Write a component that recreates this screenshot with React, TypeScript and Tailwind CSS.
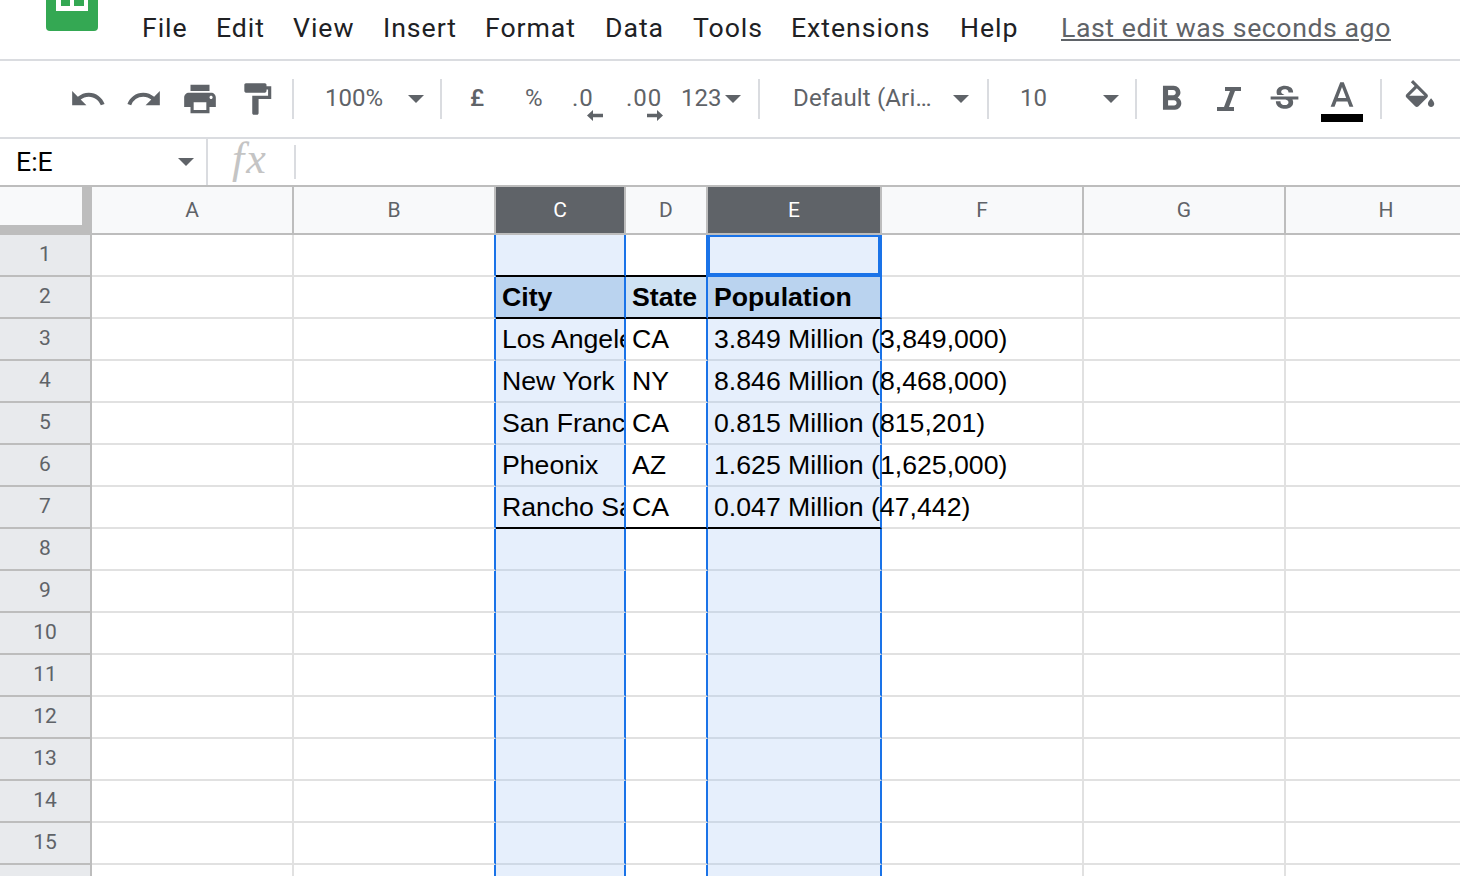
import { MdUndo, MdRedo, MdPrint, MdFormatBold, MdStrikethroughS } from "react-icons/md";

const roboto = "font-['Roboto',sans-serif]";
const arial = "font-['Liberation_Sans',Arial,sans-serif]";
const gridCols = "grid w-[1488px] grid-cols-[92px_202px_202px_130px_82px_174px_202px_202px_202px]";

const columns = ["A", "B", "C", "D", "E", "F", "G", "H"];
const selected = ["C", "E"];

const tableRows: Record<number, string[]> = {
  2: ["City", "State", "Population"],
  3: ["Los Angeles", "CA", "3.849 Million (3,849,000)"],
  4: ["New York", "NY", "8.846 Million (8,468,000)"],
  5: ["San Francisco", "CA", "0.815 Million (815,201)"],
  6: ["Pheonix", "AZ", "1.625 Million (1,625,000)"],
  7: ["Rancho Santa Margarita", "CA", "0.047 Million (47,442)"],
};

function Caret() {
  return (
    <svg width="16" height="8" viewBox="0 0 16 8" className="shrink-0 fill-[#5f6368]">
      <path d="M0 0h16L8 8z" />
    </svg>
  );
}

function Divider() {
  return <div className="h-10 w-0.5 shrink-0 bg-[#dadce0]" />;
}

function MenuBar() {
  const items: [string, string][] = [
    ["File", "w-[74px]"],
    ["Edit", "w-[77px]"],
    ["View", "w-[90px]"],
    ["Insert", "w-[102px]"],
    ["Format", "w-[120px]"],
    ["Data", "w-[88px]"],
    ["Tools", "w-[98px]"],
    ["Extensions", "w-[169px]"],
    ["Help", "w-[101px]"],
  ];
  return (
    <div className="flex h-[61px] items-start border-b-2 border-[#dadce0] pl-[46px]">
      <svg width="52" height="31" viewBox="0 0 52 31" className="shrink-0">
        <path d="M0-10h52v37a4 4 0 0 1-4 4H4a4 4 0 0 1-4-4z" fill="#34a853" />
        <path d="M10-4h32v15H10z" fill="#fff" />
        <path d="M15-2h9v8h-9zM28-2h10v8H28z" fill="#34a853" />
      </svg>
      <div className={`ml-11 flex h-[56px] items-center text-[26.67px] tracking-[0.95px] text-[#202124] ${roboto}`}>
        {items.map(([label, w]) => (
          <div key={label} className={`${w} shrink-0`}>
            {label}
          </div>
        ))}
        <span className="whitespace-nowrap tracking-[0.57px] text-[#5f6368] underline">Last edit was seconds ago</span>
      </div>
    </div>
  );
}

function Toolbar() {
  return (
    <div className={`flex h-[78px] items-center border-b-2 border-[#dadce0] pl-[69px] text-[24px] text-[#5f6368] ${roboto}`}>
      <div className="w-14 shrink-0"><MdUndo size={38} /></div>
      <div className="w-14 shrink-0"><MdRedo size={38} /></div>
      <div className="w-[57px] shrink-0"><MdPrint size={38} /></div>
      <div className="w-[54px] shrink-0">
        <svg width="38" height="38" viewBox="0 0 24 24" fill="currentColor">
          <path d="M18 4V3c0-.55-.45-1-1-1H5c-.55 0-1 .45-1 1v4c0 .55.45 1 1 1h12c.55 0 1-.45 1-1V6h1v4H9v11c0 .55.45 1 1 1h2c.55 0 1-.45 1-1v-9h8V4h-3z" />
        </svg>
      </div>
      <Divider />
      <div className="ml-[31px] w-[83px] shrink-0 pb-0.5">100%</div>
      <Caret />
      <div className="ml-4"><Divider /></div>
      <div className="ml-7 w-[55px] shrink-0 pb-0.5 font-medium">£</div>
      <div className="w-[47px] shrink-0 pb-0.5">%</div>
      <div className="mt-[9px] flex w-[54px] shrink-0 flex-col">
        <span className="leading-6 tracking-[1px]">.0</span>
        <svg width="16" height="11" viewBox="0 0 16 11" className="ml-[15px] fill-[#5f6368]">
          <path d="M6 0v3.8h10v3.4H6V11L0 5.5z" />
        </svg>
      </div>
      <div className="mt-[9px] flex w-[55px] shrink-0 flex-col">
        <span className="leading-6 tracking-[1px]">.00</span>
        <svg width="16" height="11" viewBox="0 0 16 11" className="ml-[21px] fill-[#5f6368]">
          <path d="M10 0v3.8H0v3.4h10V11l6-5.5z" />
        </svg>
      </div>
      <div className="w-11 shrink-0 pb-0.5">123</div>
      <Caret />
      <div className="ml-[17px]"><Divider /></div>
      <div className="ml-[33px] w-40 shrink-0 whitespace-nowrap pb-0.5 tracking-[0.15px]">Default (Ari…</div>
      <Caret />
      <div className="ml-[18px]"><Divider /></div>
      <div className="ml-[31px] w-[83px] shrink-0 pb-0.5">10</div>
      <Caret />
      <div className="ml-4"><Divider /></div>
      <div className="ml-3.5 w-[66px] shrink-0"><MdFormatBold size={41} /></div>
      <div className="w-[49px] shrink-0">
        <svg width="24" height="24" viewBox="0 0 24 24" fill="currentColor">
          <path d="M8 0h16v4h-6l-6 16h5v4H0v-4h7l6-16H8z" />
        </svg>
      </div>
      <div className="w-[55px] shrink-0"><MdStrikethroughS size={37} /></div>
      <div className="flex w-[59px] shrink-0 flex-col">
        <svg width="42" height="36" viewBox="0 0 24 20.6" fill="currentColor">
          <path d="M11 3L5.5 17h2.25l1.12-3h6.25l1.12 3h2.25L13 3h-2zm-1.38 9L12 5.67 14.38 12H9.62z" />
        </svg>
        <div className="mt-px h-2 w-[42px] bg-black" />
      </div>
      <Divider />
      <div className="ml-[19px]">
        <svg width="38" height="38" viewBox="0 0 24 24" fill="currentColor">
          <path d="M16.56 8.94L7.62 0 6.21 1.41l2.38 2.38-5.15 5.15c-.59.59-.59 1.54 0 2.12l5.5 5.5c.29.29.68.44 1.06.44s.77-.15 1.06-.44l5.5-5.5c.59-.58.59-1.53 0-2.12zM5.21 10L10 5.21 14.79 10H5.21zM19 11.5s-2 2.17-2 3.5c0 1.1.9 2 2 2s2-.9 2-2c0-1.33-2-3.5-2-3.5z" />
        </svg>
      </div>
    </div>
  );
}

function FormulaBar() {
  return (
    <div className="flex h-[46px] items-center">
      <div className={`w-[178px] pl-4 text-[26.67px] text-black ${roboto}`}>E:E</div>
      <Caret />
      <div className="ml-3 h-full w-0.5 bg-[#dadce0]" />
      <div className="ml-6 w-[62px] pb-1.5 font-['Liberation_Serif',serif] text-[44px] italic leading-none tracking-[2px] text-[#c4c4c4]">fx</div>
      <div className="h-[34px] w-0.5 bg-[#dadce0]" />
    </div>
  );
}

function ColumnHeader() {
  return (
    <div className={`${gridCols} h-[50px] border-y-2 border-[#bdbdbd] bg-[#f8f9fa] text-[21px] text-[#5f6368] ${roboto}`}>
      <div className="border-b-8 border-r-[10px] border-[#bdbdbd]" />
      {columns.map((c) => (
        <div
          key={c}
          className={`flex items-center justify-center border-r-2 border-[#bdbdbd] pt-0.5 ${selected.includes(c) ? "bg-[#5f6368] text-white" : ""}`}
        >
          {c}
        </div>
      ))}
    </div>
  );
}

function Row({ n }: { n: number }) {
  const data = tableRows[n];
  const black = n === 1 || n === 2 || n === 7;
  const cBottom = black ? "border-b-black" : "border-b-[#cfd9e6]";
  const dBottom = black ? "border-b-black" : "border-b-[#e1e1e1]";
  const line = "border-b-2 border-r-2 border-[#e1e1e1]";
  const text = `flex items-center pl-1.5 whitespace-nowrap text-[26.67px] text-black ${arial} ${n === 2 ? "font-bold" : ""}`;
  return (
    <div className={`${gridCols} h-[42px]`}>
      <div className={`flex items-center justify-center border-b-2 border-r-2 border-[#bdbdbd] bg-[#e8eaed] text-[21px] text-[#5f6368] ${roboto}`}>
        {n}
      </div>
      <div className={line} />
      <div className={`${line} border-r-[#1a73e8]`} />
      <div className={`${line} ${text} overflow-hidden border-r-[#1a73e8] ${cBottom} ${n === 2 ? "bg-[#bad3ef]" : "bg-[#e6effc]"}`}>
        {data?.[0]}
      </div>
      <div className={`${line} ${text} overflow-hidden border-r-[#1a73e8] ${dBottom} ${n === 2 ? "bg-[#cfe2f3]" : ""}`}>
        {data?.[1]}
      </div>
      <div className={`relative ${line} ${text} border-r-[#1a73e8] ${cBottom} ${n === 2 ? "bg-[#bad3ef]" : "bg-[#e6effc]"}`}>
        {data?.[2]}
        {n === 1 && <div className="absolute -bottom-0.5 -left-0.5 -right-0.5 top-0 border-4 border-t-2 border-[#1a73e8]" />}
      </div>
      <div className={line} />
      <div className={line} />
      <div className={line} />
    </div>
  );
}

export default function App() {
  const rows = Array.from({ length: 16 }, (_, i) => i + 1);
  return (
    <div className="h-[876px] w-[1460px] overflow-hidden bg-white">
      <MenuBar />
      <Toolbar />
      <FormulaBar />
      <ColumnHeader />
      {rows.map((n) => (
        <Row key={n} n={n} />
      ))}
    </div>
  );
}
